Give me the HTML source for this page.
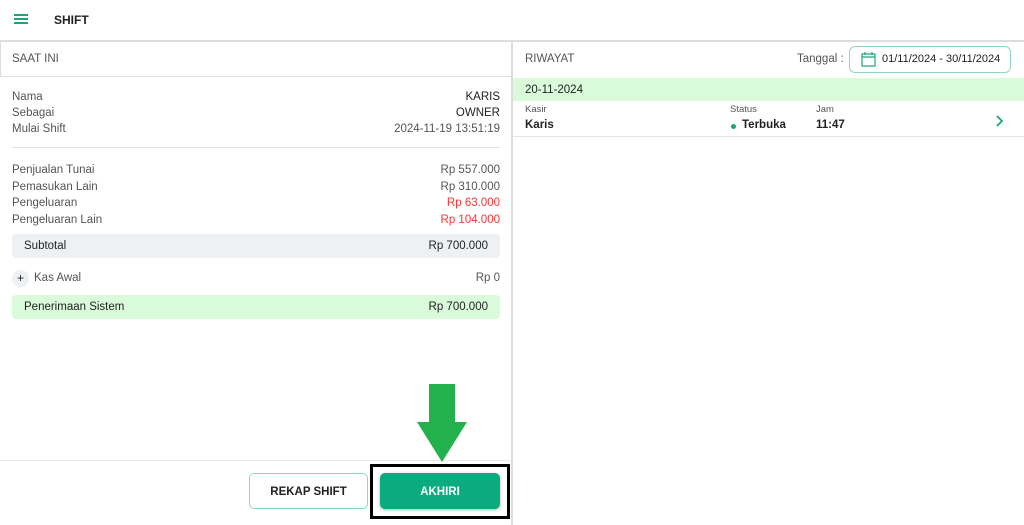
<!DOCTYPE html><html><head><style>
*{margin:0;padding:0;box-sizing:border-box}
body{width:1024px;height:525px;background:#fff;font-family:"Liberation Sans",sans-serif;font-size:11.5px;color:#555;position:relative;overflow:hidden}
.a{position:absolute}
.r{right:0;text-align:right}
.d{color:#222}
</style></head><body>
<div class="a" style="left:14px;top:14px;width:14px;height:1.5px;background:#1aa57a;box-shadow:0 4px 0 #1aa57a,0 8px 0 #1aa57a"></div>
<div class="a d" style="left:54px;top:13px;font-size:12px;font-weight:bold">SHIFT</div>
<div class="a" style="left:0;top:40px;width:1024px;height:2px;background:#ddd"></div>
<div class="a" style="left:511px;top:40px;width:2px;height:485px;background:#ddd"></div>
<div class="a" style="left:0;top:76px;width:511px;height:1px;background:#ddd"></div>
<div class="a" style="left:0;top:42px;width:1px;height:34px;background:#ddd"></div>
<div class="a" style="left:12px;top:53px">SAAT INI</div>
<div class="a" style="left:12px;top:89px;width:488px;line-height:16px">
<div style="position:relative">Nama<span class="a r d">KARIS</span></div>
<div style="position:relative">Sebagai<span class="a r d">OWNER</span></div>
<div style="position:relative">Mulai Shift<span class="a r">2024-11-19 13:51:19</span></div>
</div>
<div class="a" style="left:12px;top:147px;width:488px;height:1px;background:#e5e5e5"></div>
<div class="a" style="left:12px;top:162px;width:488px;line-height:16.5px">
<div style="position:relative">Penjualan Tunai<span class="a r">Rp 557.000</span></div>
<div style="position:relative">Pemasukan Lain<span class="a r">Rp 310.000</span></div>
<div style="position:relative">Pengeluaran<span class="a r" style="color:#f33">Rp 63.000</span></div>
<div style="position:relative">Pengeluaran Lain<span class="a r" style="color:#f33">Rp 104.000</span></div>
</div>
<div class="a d" style="left:12px;top:234px;width:488px;height:24px;background:#eef1f4;border-radius:4px;padding:6px 12px;line-height:12px">Subtotal<span style="float:right">Rp 700.000</span></div>
<div class="a d" style="left:12px;top:270px;width:17px;height:17px;border-radius:50%;background:#eef1f4;text-align:center;line-height:16px;font-size:12px">+</div>
<div class="a" style="left:34px;top:272px">Kas Awal</div>
<div class="a" style="left:400px;width:100px;top:272px;text-align:right">Rp 0</div>
<div class="a d" style="left:12px;top:295px;width:488px;height:24px;background:#d9fbd9;border-radius:4px;padding:6px 12px;line-height:12px">Penerimaan Sistem<span style="float:right">Rp 700.000</span></div>
<div class="a" style="left:0;top:460px;width:511px;height:1px;background:#e8e8e8"></div>
<div class="a d" style="left:249px;top:473px;width:119px;height:36px;border:1.5px solid #8fd8c0;border-radius:5px;text-align:center;line-height:36px;font-weight:bold;font-size:11.5px">REKAP SHIFT</div>
<div class="a" style="left:370px;top:464px;width:140px;height:55px;border:3px solid #000"></div>
<div class="a" style="left:380px;top:473px;width:120px;height:36px;background:#0aab7f;border-radius:5px;text-align:center;line-height:38px;font-weight:bold;color:#fff;box-shadow:0 1px 3px rgba(0,0,0,.3)">AKHIRI</div>
<svg class="a" style="left:414px;top:383px" width="56" height="80"><path d="M15 1H41V39H53L28 79L3 39H15Z" fill="#22b14c"/></svg>
<div class="a" style="left:525px;top:53px">RIWAYAT</div>
<div class="a" style="left:797px;top:53px">Tanggal :</div>
<div class="a d" style="left:849px;top:46px;width:162px;height:27px;border:1.5px solid #8fd8c0;border-radius:6px;padding-left:32px;line-height:24px;font-size:11px;white-space:nowrap">01/11/2024 - 30/11/2024</div>
<svg class="a" style="left:861px;top:51px" width="16" height="17"><rect x="1" y="3" width="13" height="12" fill="none" stroke="#1aa57a" stroke-width="1.2"/><path d="M1 6H14M4 1V4M11 1V4" stroke="#1aa57a" stroke-width="1.2"/></svg>
<div class="a d" style="left:513px;top:78px;width:511px;height:23px;background:#d9fbd9;padding:6px 12px;line-height:12px">20-11-2024</div>
<div class="a" style="left:525px;top:104px;font-size:9.5px">Kasir</div>
<div class="a" style="left:730px;top:104px;font-size:9.5px">Status</div>
<div class="a" style="left:816px;top:104px;font-size:9.5px">Jam</div>
<div class="a d" style="left:525px;top:119px;font-weight:bold">Karis</div>
<div class="a" style="left:731px;top:124px;width:5px;height:5px;border-radius:50%;background:#1aa57a"></div>
<div class="a d" style="left:742px;top:119px;font-weight:bold">Terbuka</div>
<div class="a d" style="left:816px;top:119px;font-weight:bold">11:47</div>
<svg class="a" style="left:995px;top:115px" width="10" height="12"><path d="M2 1L7 6L2 11" fill="none" stroke="#1aa57a" stroke-width="1.8"/></svg>
<div class="a" style="left:513px;top:136px;width:511px;height:1px;background:#e5e5e5"></div>
</body></html>
